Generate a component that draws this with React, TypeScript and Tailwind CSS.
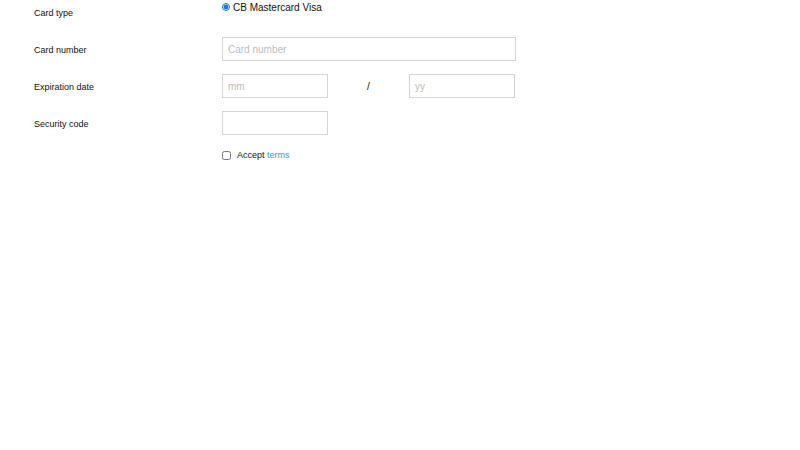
export default function App() {
  const input =
    "h-[24px] border border-[#d4d4d4] bg-white px-[5px] text-[10px] text-[#333] outline-none placeholder:text-[#bdbdbd]";
  return (
    <div className="min-h-[450px] w-[800px] bg-white pl-[34px] font-['Liberation_Sans',Arial,sans-serif] text-[#111]">
      <div className="flex flex-col gap-[13px]">
        <div className="flex h-[24px]">
          <div className="flex w-[188px] items-center pt-[3px] text-[9px]">Card type</div>
          <label className="flex h-[14px] items-center gap-[3px] text-[10px]">
            <input type="radio" name="ct" defaultChecked className="m-0 h-[8px] w-[8px] accent-[#1a73e8]" />
            CB Mastercard Visa
          </label>
        </div>
        <div className="flex items-center">
          <div className="w-[188px] pt-[3px] text-[9px]">Card number</div>
          <input className={`${input} w-[294px]`} placeholder="Card number" />
        </div>
        <div className="flex items-center">
          <div className="w-[188px] pt-[3px] text-[9px]">Expiration date</div>
          <input className={`${input} w-[106px]`} placeholder="mm" />
          <div className="w-[81px] text-center text-[10px]">/</div>
          <input className={`${input} w-[106px]`} placeholder="yy" />
        </div>
        <div className="flex items-center">
          <div className="w-[188px] pt-[4px] text-[9px]">Security code</div>
          <input className={`${input} w-[106px]`} />
        </div>
        <div className="flex items-center pt-[1px]">
          <div className="w-[188px]" />
          <label className="flex items-center gap-[6px] text-[9px]">
            <input type="checkbox" className="m-0 h-[9px] w-[9px]" />
            <span>
              Accept <a className="text-[#3a9bc4]">terms</a>
            </span>
          </label>
        </div>
      </div>
    </div>
  );
}
